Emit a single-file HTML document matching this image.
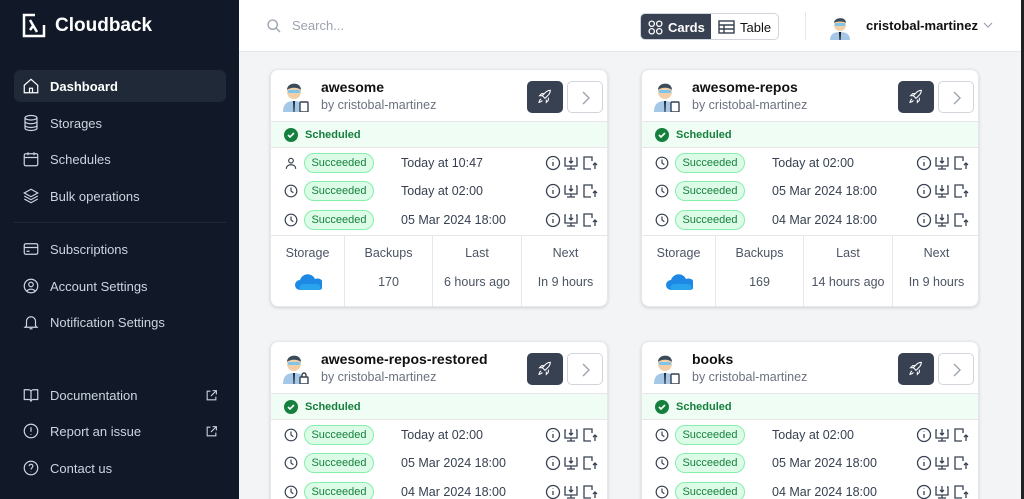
<!DOCTYPE html>
<html style="height:499px;overflow:hidden"><head><meta charset="utf-8"><style>
*{box-sizing:border-box;margin:0;padding:0}
html,body{width:1024px;height:499px;overflow:hidden}
body{font-family:"Liberation Sans",sans-serif;background:#f3f4f6;position:relative}
.sb{position:absolute;left:0;top:0;width:239px;height:499px;background:#111827;color:#cbd5e1}
.logo{position:absolute;left:21px;top:13px;display:flex;align-items:center;gap:8px;color:#fff;font-weight:bold;font-size:19px}
.nav{position:absolute;left:14px;width:212px;height:32px;display:flex;align-items:center;font-size:13px;border-radius:6px}
.nav svg{position:absolute;left:8px}
.nav span{position:absolute;left:36px}
.nav.act{background:#1f2937;color:#fff;font-weight:bold}
.ext{position:absolute;right:8px;left:auto!important}
.top{position:absolute;left:239px;top:0;right:0;height:52px;background:#fff;border-bottom:1px solid #e5e7eb}
.card{position:absolute;width:338px;height:238px;background:#fff;border:1px solid #e5e7eb;border-radius:8px;box-shadow:0 1px 3px rgba(0,0,0,.15);overflow:hidden}
.av{position:absolute;left:12px;top:8px}
.ttl{position:absolute;left:50px;top:9px;font-weight:bold;font-size:14px;color:#111}
.by{position:absolute;left:50px;top:28px;font-size:12.5px;color:#6b7280}
.rk{position:absolute;left:256px;top:11px;width:36px;height:32px;background:#374151;border-radius:5px}
.ch{position:absolute;left:296px;top:11px;width:36px;height:32px;border:1px solid #d1d5db;border-radius:5px}
.sch{position:absolute;left:0;top:51px;width:100%;height:27px;background:#f0fdf4;border-top:1px solid #e5e7eb;border-bottom:1px solid #e5e7eb;font-size:11px;color:#15803d;font-weight:bold}
.row{position:absolute;left:0;width:100%;height:24px}
.pill{position:absolute;left:33px;top:2px;width:70px;height:20px;border:1px solid #86efac;background:#dcfce7;border-radius:10px;color:#15803d;font-size:11px;text-align:center;line-height:18px}
.dt{position:absolute;left:130px;top:5px;font-size:12.5px;color:#374151}
.stats{position:absolute;left:0;top:165px;width:100%;height:73px;border-top:1px solid #e5e7eb;font-size:12.5px;color:#4b5563}
.col{position:absolute;top:0;height:73px;text-align:center;border-left:1px solid #e5e7eb}
.col .l{position:absolute;top:10px;width:100%}
.col .v{position:absolute;top:39px;width:100%}
</style></head><body>
<div class="sb">
 <div class="logo"><svg width="26" height="26" viewBox="0 0 26 26" fill="none" stroke="#fff" stroke-width="2.5"><path d="M14 2H3v21h20V12"/><path d="M9 7l7 12M9 17l3-4"/></svg>Cloudback</div>
 <div class="nav act" style="top:70px"><svg width="18" height="18" viewBox="0 0 24 24" fill="none" stroke="#fff" stroke-width="1.6"><path d="M3 11l9-8 9 8v10H3z"/><path d="M10 21v-6h4v6"/></svg><span>Dashboard</span></div>
 <div class="nav" style="top:107px"><svg width="18" height="18" viewBox="0 0 24 24" fill="none" stroke="#cbd5e1" stroke-width="1.6"><ellipse cx="12" cy="5" rx="8" ry="3"/><path d="M4 5v14c0 1.7 3.6 3 8 3s8-1.3 8-3V5M4 10c0 1.7 3.6 3 8 3s8-1.3 8-3M4 15c0 1.7 3.6 3 8 3s8-1.3 8-3"/></svg><span>Storages</span></div>
 <div class="nav" style="top:143px"><svg width="18" height="18" viewBox="0 0 24 24" fill="none" stroke="#cbd5e1" stroke-width="1.6"><rect x="3" y="5" width="18" height="16" rx="2"/><path d="M3 10h18M8 3v4M16 3v4"/></svg><span>Schedules</span></div>
 <div class="nav" style="top:180px"><svg width="18" height="18" viewBox="0 0 24 24" fill="none" stroke="#cbd5e1" stroke-width="1.6"><path d="M12 3l9 5-9 5-9-5zM3 12l9 5 9-5M3 16l9 5 9-5"/></svg><span>Bulk operations</span></div>
 <div style="position:absolute;left:14px;top:222px;width:212px;height:1px;background:#1f2937"></div>
 <div class="nav" style="top:233px"><svg width="18" height="18" viewBox="0 0 24 24" fill="none" stroke="#cbd5e1" stroke-width="1.6"><rect x="3" y="5" width="18" height="14" rx="2"/><path d="M3 10h18M6 15h4"/></svg><span>Subscriptions</span></div>
 <div class="nav" style="top:270px"><svg width="18" height="18" viewBox="0 0 24 24" fill="none" stroke="#cbd5e1" stroke-width="1.6"><circle cx="12" cy="12" r="9"/><circle cx="12" cy="10" r="3"/><path d="M6.5 18.5c3-3 8-3 11 0"/></svg><span>Account Settings</span></div>
 <div class="nav" style="top:306px"><svg width="18" height="18" viewBox="0 0 24 24" fill="none" stroke="#cbd5e1" stroke-width="1.6"><path d="M6 17V11a6 6 0 0112 0v6l2 2H4zM10 21h4"/></svg><span>Notification Settings</span></div>
 <div class="nav" style="top:379px"><svg width="18" height="18" viewBox="0 0 24 24" fill="none" stroke="#cbd5e1" stroke-width="1.6"><path d="M3 5h6a3 3 0 013 3v13a3 3 0 00-3-3H3zM21 5h-6a3 3 0 00-3 3v13a3 3 0 013-3h6z"/></svg><span>Documentation</span><svg class="ext" width="13" height="13" viewBox="0 0 24 24" fill="none" stroke="#cbd5e1" stroke-width="2"><path d="M10 4H4v16h16v-6M14 3h7v7M21 3l-10 10"/></svg></div>
 <div class="nav" style="top:415px"><svg width="18" height="18" viewBox="0 0 24 24" fill="none" stroke="#cbd5e1" stroke-width="1.6"><circle cx="12" cy="12" r="9"/><path d="M12 7v6M12 16v1"/></svg><span>Report an issue</span><svg class="ext" width="13" height="13" viewBox="0 0 24 24" fill="none" stroke="#cbd5e1" stroke-width="2"><path d="M10 4H4v16h16v-6M14 3h7v7M21 3l-10 10"/></svg></div>
 <div class="nav" style="top:452px"><svg width="18" height="18" viewBox="0 0 24 24" fill="none" stroke="#cbd5e1" stroke-width="1.6"><circle cx="12" cy="12" r="9"/><path d="M9.5 9.5a2.5 2.5 0 114 2c-1 .7-1.5 1.2-1.5 2.5M12 17v.5"/></svg><span>Contact us</span></div>
</div>
<div class="top">
 <svg style="position:absolute;left:27px;top:18px" width="16" height="16" viewBox="0 0 24 24" fill="none" stroke="#9ca3af" stroke-width="2"><circle cx="10" cy="10" r="7"/><path d="M15 15l6 6"/></svg>
 <div style="position:absolute;left:53px;top:18px;font-size:13px;color:#9ca3af">Search...</div>
 <div style="position:absolute;left:401px;top:13px;width:139px;height:27px;border:1px solid #d1d5db;border-radius:5px;overflow:hidden;font-size:13px">
  <div style="position:absolute;left:0;top:0;width:70px;height:27px;background:#374151;color:#fff;font-weight:bold"><svg style="position:absolute;left:7px;top:6px" width="15" height="15" viewBox="0 0 16 16" fill="none" stroke="#fff" stroke-width="1.4"><circle cx="4" cy="4" r="2.8"/><circle cx="12" cy="4" r="2.8"/><circle cx="4" cy="12" r="2.8"/><circle cx="12" cy="12" r="2.8"/></svg><span style="position:absolute;left:27px;top:6px">Cards</span></div>
  <svg style="position:absolute;left:77px;top:6px" width="17" height="14" viewBox="0 0 17 14" fill="none" stroke="#374151" stroke-width="1.4"><rect x="1" y="1" width="15" height="12"/><path d="M1 5h15M1 9h15M6 5v8"/></svg><span style="position:absolute;left:99px;top:6px;color:#111">Table</span>
 </div>
 <div style="position:absolute;left:566px;top:12px;width:1px;height:28px;background:#e5e7eb"></div>
 <svg style="position:absolute;left:590px;top:14px" width="22" height="26" viewBox="0 0 22 26"><path d="M1 26c0-6 4-8 10-8s10 2 10 8z" fill="#a5c8e8"/><path d="M10 18h2l-.5 8h-1z" fill="#111"/><circle cx="11" cy="11" r="6" fill="#f3cfa8"/><path d="M5 9c0-6 12-7 12 0-2-2-10-2-12 0z" fill="#3b4a5a"/><rect x="6" y="9" width="10" height="3" rx="1" fill="#7fc4ea"/></svg>
 <div style="position:absolute;left:627px;top:18px;font-size:13px;font-weight:bold;color:#111">cristobal-martinez</div>
 <svg style="position:absolute;left:744px;top:22px" width="10" height="6" viewBox="0 0 10 6" fill="none" stroke="#9ca3af" stroke-width="1.2"><path d="M1 1l4 4 4-4"/></svg>
</div>

<div class="card" style="left:270px;top:69px">
 <svg class="av" width="26" height="34" viewBox="0 0 26 34"><path d="M0 34c0-8 4-11 11-11s11 3 11 11z" fill="#a5c8e8"/><path d="M10 23h2l-.5 11h-1z" fill="#1f2937"/><circle cx="11" cy="14" r="7" fill="#f3cfa8"/><path d="M4 12c0-8 14-9 14 0-3-3-11-3-14 0z" fill="#3b4a5a"/><rect x="5" y="12" width="12" height="3" rx="1" fill="#7fc4ea"/><rect x="17" y="24" width="8" height="10" rx="1" fill="#fff" stroke="#374151" stroke-width="1.4"/></svg>
 <div class="ttl">awesome</div><div class="by">by cristobal-martinez</div>
 <div class="rk"><svg style="position:absolute;left:10px;top:8px" width="16" height="16" viewBox="0 0 24 24" fill="none" stroke="#fff" stroke-width="1.6"><path d="M14 4c3-2 6-2 6-2s0 3-2 6l-6 6-4-4zM8 10H4l3-3h4M14 16v4l3-3v-4M6 15c-2 1-3 5-3 5s4-1 5-3"/></svg></div>
 <div class="ch"><svg style="position:absolute;left:13px;top:9px" width="9" height="14" viewBox="0 0 9 14" fill="none" stroke="#9ca3af" stroke-width="1.4"><path d="M2 1l6 6-6 6"/></svg></div>
 <div class="sch"><svg style="position:absolute;left:13px;top:6px" width="14" height="14" viewBox="0 0 14 14"><circle cx="7" cy="7" r="7" fill="#15803d"/><path d="M4 7l2 2 4-4" stroke="#fff" stroke-width="1.6" fill="none"/></svg><span style="position:absolute;left:34px;top:7px">Scheduled</span></div>
 <div class="row" style="top:81px"><svg style="position:absolute;left:13px;top:5px" width="14" height="14" viewBox="0 0 24 24" fill="none" stroke="#374151" stroke-width="2"><circle cx="12" cy="8" r="4"/><path d="M4 22c0-5 4-7 8-7s8 2 8 7"/></svg><div class="pill">Succeeded</div><div class="dt">Today at 10:47</div><svg style="position:absolute;left:274px;top:4px" width="56" height="16" viewBox="0 0 56 16" fill="none" stroke="#374151" stroke-width="1.3"><circle cx="8" cy="8" r="6.5"/><path d="M8 7v4M8 4.5v.5"/><path d="M21 3h-1v8h12V3h-1M26 2v6M24 6l2 2 2-2M26 11v3M22 14h8"/><path d="M46 14h-7V2h8v4M50 14V8M48 10l2-2 2 2"/></svg></div>
 <div class="row" style="top:109px"><svg style="position:absolute;left:13px;top:5px" width="14" height="14" viewBox="0 0 24 24" fill="none" stroke="#374151" stroke-width="2"><circle cx="12" cy="12" r="10"/><path d="M12 6v6l4 3"/></svg><div class="pill">Succeeded</div><div class="dt">Today at 02:00</div><svg style="position:absolute;left:274px;top:4px" width="56" height="16" viewBox="0 0 56 16" fill="none" stroke="#374151" stroke-width="1.3"><circle cx="8" cy="8" r="6.5"/><path d="M8 7v4M8 4.5v.5"/><path d="M21 3h-1v8h12V3h-1M26 2v6M24 6l2 2 2-2M26 11v3M22 14h8"/><path d="M46 14h-7V2h8v4M50 14V8M48 10l2-2 2 2"/></svg></div>
 <div class="row" style="top:138px"><svg style="position:absolute;left:13px;top:5px" width="14" height="14" viewBox="0 0 24 24" fill="none" stroke="#374151" stroke-width="2"><circle cx="12" cy="12" r="10"/><path d="M12 6v6l4 3"/></svg><div class="pill">Succeeded</div><div class="dt">05 Mar 2024 18:00</div><svg style="position:absolute;left:274px;top:4px" width="56" height="16" viewBox="0 0 56 16" fill="none" stroke="#374151" stroke-width="1.3"><circle cx="8" cy="8" r="6.5"/><path d="M8 7v4M8 4.5v.5"/><path d="M21 3h-1v8h12V3h-1M26 2v6M24 6l2 2 2-2M26 11v3M22 14h8"/><path d="M46 14h-7V2h8v4M50 14V8M48 10l2-2 2 2"/></svg></div>
 <div class="stats">
  <div class="col" style="left:0;width:73px;border:none"><div class="l">Storage</div><svg style="position:absolute;left:23px;top:37px" width="28" height="18" viewBox="0 0 28 18"><path d="M6 17a5 5 0 010-10 8 8 0 0115-1 6 6 0 015 11z" fill="#1e88e5"/><path d="M6 17a4 4 0 013-6h14a4 4 0 013 6z" fill="#29a3ec"/></svg></div>
  <div class="col" style="left:73px;width:88px"><div class="l">Backups</div><div class="v">170</div></div>
  <div class="col" style="left:161px;width:89px"><div class="l">Last</div><div class="v">6 hours ago</div></div>
  <div class="col" style="left:250px;width:88px"><div class="l">Next</div><div class="v">In 9 hours</div></div>
 </div>
</div>

<div class="card" style="left:641px;top:69px">
 <svg class="av" width="26" height="34" viewBox="0 0 26 34"><path d="M0 34c0-8 4-11 11-11s11 3 11 11z" fill="#a5c8e8"/><path d="M10 23h2l-.5 11h-1z" fill="#1f2937"/><circle cx="11" cy="14" r="7" fill="#f3cfa8"/><path d="M4 12c0-8 14-9 14 0-3-3-11-3-14 0z" fill="#3b4a5a"/><rect x="5" y="12" width="12" height="3" rx="1" fill="#7fc4ea"/><rect x="17" y="24" width="8" height="10" rx="1" fill="#fff" stroke="#374151" stroke-width="1.4"/></svg>
 <div class="ttl">awesome-repos</div><div class="by">by cristobal-martinez</div>
 <div class="rk"><svg style="position:absolute;left:10px;top:8px" width="16" height="16" viewBox="0 0 24 24" fill="none" stroke="#fff" stroke-width="1.6"><path d="M14 4c3-2 6-2 6-2s0 3-2 6l-6 6-4-4zM8 10H4l3-3h4M14 16v4l3-3v-4M6 15c-2 1-3 5-3 5s4-1 5-3"/></svg></div>
 <div class="ch"><svg style="position:absolute;left:13px;top:9px" width="9" height="14" viewBox="0 0 9 14" fill="none" stroke="#9ca3af" stroke-width="1.4"><path d="M2 1l6 6-6 6"/></svg></div>
 <div class="sch"><svg style="position:absolute;left:13px;top:6px" width="14" height="14" viewBox="0 0 14 14"><circle cx="7" cy="7" r="7" fill="#15803d"/><path d="M4 7l2 2 4-4" stroke="#fff" stroke-width="1.6" fill="none"/></svg><span style="position:absolute;left:34px;top:7px">Scheduled</span></div>
 <div class="row" style="top:81px"><svg style="position:absolute;left:13px;top:5px" width="14" height="14" viewBox="0 0 24 24" fill="none" stroke="#374151" stroke-width="2"><circle cx="12" cy="12" r="10"/><path d="M12 6v6l4 3"/></svg><div class="pill">Succeeded</div><div class="dt">Today at 02:00</div><svg style="position:absolute;left:274px;top:4px" width="56" height="16" viewBox="0 0 56 16" fill="none" stroke="#374151" stroke-width="1.3"><circle cx="8" cy="8" r="6.5"/><path d="M8 7v4M8 4.5v.5"/><path d="M21 3h-1v8h12V3h-1M26 2v6M24 6l2 2 2-2M26 11v3M22 14h8"/><path d="M46 14h-7V2h8v4M50 14V8M48 10l2-2 2 2"/></svg></div>
 <div class="row" style="top:109px"><svg style="position:absolute;left:13px;top:5px" width="14" height="14" viewBox="0 0 24 24" fill="none" stroke="#374151" stroke-width="2"><circle cx="12" cy="12" r="10"/><path d="M12 6v6l4 3"/></svg><div class="pill">Succeeded</div><div class="dt">05 Mar 2024 18:00</div><svg style="position:absolute;left:274px;top:4px" width="56" height="16" viewBox="0 0 56 16" fill="none" stroke="#374151" stroke-width="1.3"><circle cx="8" cy="8" r="6.5"/><path d="M8 7v4M8 4.5v.5"/><path d="M21 3h-1v8h12V3h-1M26 2v6M24 6l2 2 2-2M26 11v3M22 14h8"/><path d="M46 14h-7V2h8v4M50 14V8M48 10l2-2 2 2"/></svg></div>
 <div class="row" style="top:138px"><svg style="position:absolute;left:13px;top:5px" width="14" height="14" viewBox="0 0 24 24" fill="none" stroke="#374151" stroke-width="2"><circle cx="12" cy="12" r="10"/><path d="M12 6v6l4 3"/></svg><div class="pill">Succeeded</div><div class="dt">04 Mar 2024 18:00</div><svg style="position:absolute;left:274px;top:4px" width="56" height="16" viewBox="0 0 56 16" fill="none" stroke="#374151" stroke-width="1.3"><circle cx="8" cy="8" r="6.5"/><path d="M8 7v4M8 4.5v.5"/><path d="M21 3h-1v8h12V3h-1M26 2v6M24 6l2 2 2-2M26 11v3M22 14h8"/><path d="M46 14h-7V2h8v4M50 14V8M48 10l2-2 2 2"/></svg></div>
 <div class="stats">
  <div class="col" style="left:0;width:73px;border:none"><div class="l">Storage</div><svg style="position:absolute;left:23px;top:37px" width="28" height="18" viewBox="0 0 28 18"><path d="M6 17a5 5 0 010-10 8 8 0 0115-1 6 6 0 015 11z" fill="#1e88e5"/><path d="M6 17a4 4 0 013-6h14a4 4 0 013 6z" fill="#29a3ec"/></svg></div>
  <div class="col" style="left:73px;width:88px"><div class="l">Backups</div><div class="v">169</div></div>
  <div class="col" style="left:161px;width:89px"><div class="l">Last</div><div class="v">14 hours ago</div></div>
  <div class="col" style="left:250px;width:88px"><div class="l">Next</div><div class="v">In 9 hours</div></div>
 </div>
</div>

<div class="card" style="left:270px;top:341px">
 <svg class="av" width="26" height="34" viewBox="0 0 26 34"><path d="M0 34c0-8 4-11 11-11s11 3 11 11z" fill="#a5c8e8"/><path d="M10 23h2l-.5 11h-1z" fill="#1f2937"/><circle cx="11" cy="14" r="7" fill="#f3cfa8"/><path d="M4 12c0-8 14-9 14 0-3-3-11-3-14 0z" fill="#3b4a5a"/><rect x="5" y="12" width="12" height="3" rx="1" fill="#7fc4ea"/><rect x="17" y="27" width="8" height="7" rx="1" fill="#fff" stroke="#374151" stroke-width="1.4"/><path d="M19 27v-2a2 2 0 014 0v2" stroke="#374151" stroke-width="1.4" fill="none"/></svg>
 <div class="ttl">awesome-repos-restored</div><div class="by">by cristobal-martinez</div>
 <div class="rk"><svg style="position:absolute;left:10px;top:8px" width="16" height="16" viewBox="0 0 24 24" fill="none" stroke="#fff" stroke-width="1.6"><path d="M14 4c3-2 6-2 6-2s0 3-2 6l-6 6-4-4zM8 10H4l3-3h4M14 16v4l3-3v-4M6 15c-2 1-3 5-3 5s4-1 5-3"/></svg></div>
 <div class="ch"><svg style="position:absolute;left:13px;top:9px" width="9" height="14" viewBox="0 0 9 14" fill="none" stroke="#9ca3af" stroke-width="1.4"><path d="M2 1l6 6-6 6"/></svg></div>
 <div class="sch"><svg style="position:absolute;left:13px;top:6px" width="14" height="14" viewBox="0 0 14 14"><circle cx="7" cy="7" r="7" fill="#15803d"/><path d="M4 7l2 2 4-4" stroke="#fff" stroke-width="1.6" fill="none"/></svg><span style="position:absolute;left:34px;top:7px">Scheduled</span></div>
 <div class="row" style="top:81px"><svg style="position:absolute;left:13px;top:5px" width="14" height="14" viewBox="0 0 24 24" fill="none" stroke="#374151" stroke-width="2"><circle cx="12" cy="12" r="10"/><path d="M12 6v6l4 3"/></svg><div class="pill">Succeeded</div><div class="dt">Today at 02:00</div><svg style="position:absolute;left:274px;top:4px" width="56" height="16" viewBox="0 0 56 16" fill="none" stroke="#374151" stroke-width="1.3"><circle cx="8" cy="8" r="6.5"/><path d="M8 7v4M8 4.5v.5"/><path d="M21 3h-1v8h12V3h-1M26 2v6M24 6l2 2 2-2M26 11v3M22 14h8"/><path d="M46 14h-7V2h8v4M50 14V8M48 10l2-2 2 2"/></svg></div>
 <div class="row" style="top:109px"><svg style="position:absolute;left:13px;top:5px" width="14" height="14" viewBox="0 0 24 24" fill="none" stroke="#374151" stroke-width="2"><circle cx="12" cy="12" r="10"/><path d="M12 6v6l4 3"/></svg><div class="pill">Succeeded</div><div class="dt">05 Mar 2024 18:00</div><svg style="position:absolute;left:274px;top:4px" width="56" height="16" viewBox="0 0 56 16" fill="none" stroke="#374151" stroke-width="1.3"><circle cx="8" cy="8" r="6.5"/><path d="M8 7v4M8 4.5v.5"/><path d="M21 3h-1v8h12V3h-1M26 2v6M24 6l2 2 2-2M26 11v3M22 14h8"/><path d="M46 14h-7V2h8v4M50 14V8M48 10l2-2 2 2"/></svg></div>
 <div class="row" style="top:138px"><svg style="position:absolute;left:13px;top:5px" width="14" height="14" viewBox="0 0 24 24" fill="none" stroke="#374151" stroke-width="2"><circle cx="12" cy="12" r="10"/><path d="M12 6v6l4 3"/></svg><div class="pill">Succeeded</div><div class="dt">04 Mar 2024 18:00</div><svg style="position:absolute;left:274px;top:4px" width="56" height="16" viewBox="0 0 56 16" fill="none" stroke="#374151" stroke-width="1.3"><circle cx="8" cy="8" r="6.5"/><path d="M8 7v4M8 4.5v.5"/><path d="M21 3h-1v8h12V3h-1M26 2v6M24 6l2 2 2-2M26 11v3M22 14h8"/><path d="M46 14h-7V2h8v4M50 14V8M48 10l2-2 2 2"/></svg></div>
</div>

<div class="card" style="left:641px;top:341px">
 <svg class="av" width="26" height="34" viewBox="0 0 26 34"><path d="M0 34c0-8 4-11 11-11s11 3 11 11z" fill="#a5c8e8"/><path d="M10 23h2l-.5 11h-1z" fill="#1f2937"/><circle cx="11" cy="14" r="7" fill="#f3cfa8"/><path d="M4 12c0-8 14-9 14 0-3-3-11-3-14 0z" fill="#3b4a5a"/><rect x="5" y="12" width="12" height="3" rx="1" fill="#7fc4ea"/><rect x="17" y="24" width="8" height="10" rx="1" fill="#fff" stroke="#374151" stroke-width="1.4"/></svg>
 <div class="ttl">books</div><div class="by">by cristobal-martinez</div>
 <div class="rk"><svg style="position:absolute;left:10px;top:8px" width="16" height="16" viewBox="0 0 24 24" fill="none" stroke="#fff" stroke-width="1.6"><path d="M14 4c3-2 6-2 6-2s0 3-2 6l-6 6-4-4zM8 10H4l3-3h4M14 16v4l3-3v-4M6 15c-2 1-3 5-3 5s4-1 5-3"/></svg></div>
 <div class="ch"><svg style="position:absolute;left:13px;top:9px" width="9" height="14" viewBox="0 0 9 14" fill="none" stroke="#9ca3af" stroke-width="1.4"><path d="M2 1l6 6-6 6"/></svg></div>
 <div class="sch"><svg style="position:absolute;left:13px;top:6px" width="14" height="14" viewBox="0 0 14 14"><circle cx="7" cy="7" r="7" fill="#15803d"/><path d="M4 7l2 2 4-4" stroke="#fff" stroke-width="1.6" fill="none"/></svg><span style="position:absolute;left:34px;top:7px">Scheduled</span></div>
 <div class="row" style="top:81px"><svg style="position:absolute;left:13px;top:5px" width="14" height="14" viewBox="0 0 24 24" fill="none" stroke="#374151" stroke-width="2"><circle cx="12" cy="12" r="10"/><path d="M12 6v6l4 3"/></svg><div class="pill">Succeeded</div><div class="dt">Today at 02:00</div><svg style="position:absolute;left:274px;top:4px" width="56" height="16" viewBox="0 0 56 16" fill="none" stroke="#374151" stroke-width="1.3"><circle cx="8" cy="8" r="6.5"/><path d="M8 7v4M8 4.5v.5"/><path d="M21 3h-1v8h12V3h-1M26 2v6M24 6l2 2 2-2M26 11v3M22 14h8"/><path d="M46 14h-7V2h8v4M50 14V8M48 10l2-2 2 2"/></svg></div>
 <div class="row" style="top:109px"><svg style="position:absolute;left:13px;top:5px" width="14" height="14" viewBox="0 0 24 24" fill="none" stroke="#374151" stroke-width="2"><circle cx="12" cy="12" r="10"/><path d="M12 6v6l4 3"/></svg><div class="pill">Succeeded</div><div class="dt">05 Mar 2024 18:00</div><svg style="position:absolute;left:274px;top:4px" width="56" height="16" viewBox="0 0 56 16" fill="none" stroke="#374151" stroke-width="1.3"><circle cx="8" cy="8" r="6.5"/><path d="M8 7v4M8 4.5v.5"/><path d="M21 3h-1v8h12V3h-1M26 2v6M24 6l2 2 2-2M26 11v3M22 14h8"/><path d="M46 14h-7V2h8v4M50 14V8M48 10l2-2 2 2"/></svg></div>
 <div class="row" style="top:138px"><svg style="position:absolute;left:13px;top:5px" width="14" height="14" viewBox="0 0 24 24" fill="none" stroke="#374151" stroke-width="2"><circle cx="12" cy="12" r="10"/><path d="M12 6v6l4 3"/></svg><div class="pill">Succeeded</div><div class="dt">04 Mar 2024 18:00</div><svg style="position:absolute;left:274px;top:4px" width="56" height="16" viewBox="0 0 56 16" fill="none" stroke="#374151" stroke-width="1.3"><circle cx="8" cy="8" r="6.5"/><path d="M8 7v4M8 4.5v.5"/><path d="M21 3h-1v8h12V3h-1M26 2v6M24 6l2 2 2-2M26 11v3M22 14h8"/><path d="M46 14h-7V2h8v4M50 14V8M48 10l2-2 2 2"/></svg></div>
</div>
<div style="position:absolute;right:0;top:0;width:3px;height:499px;background:#222"></div>
</body></html>
